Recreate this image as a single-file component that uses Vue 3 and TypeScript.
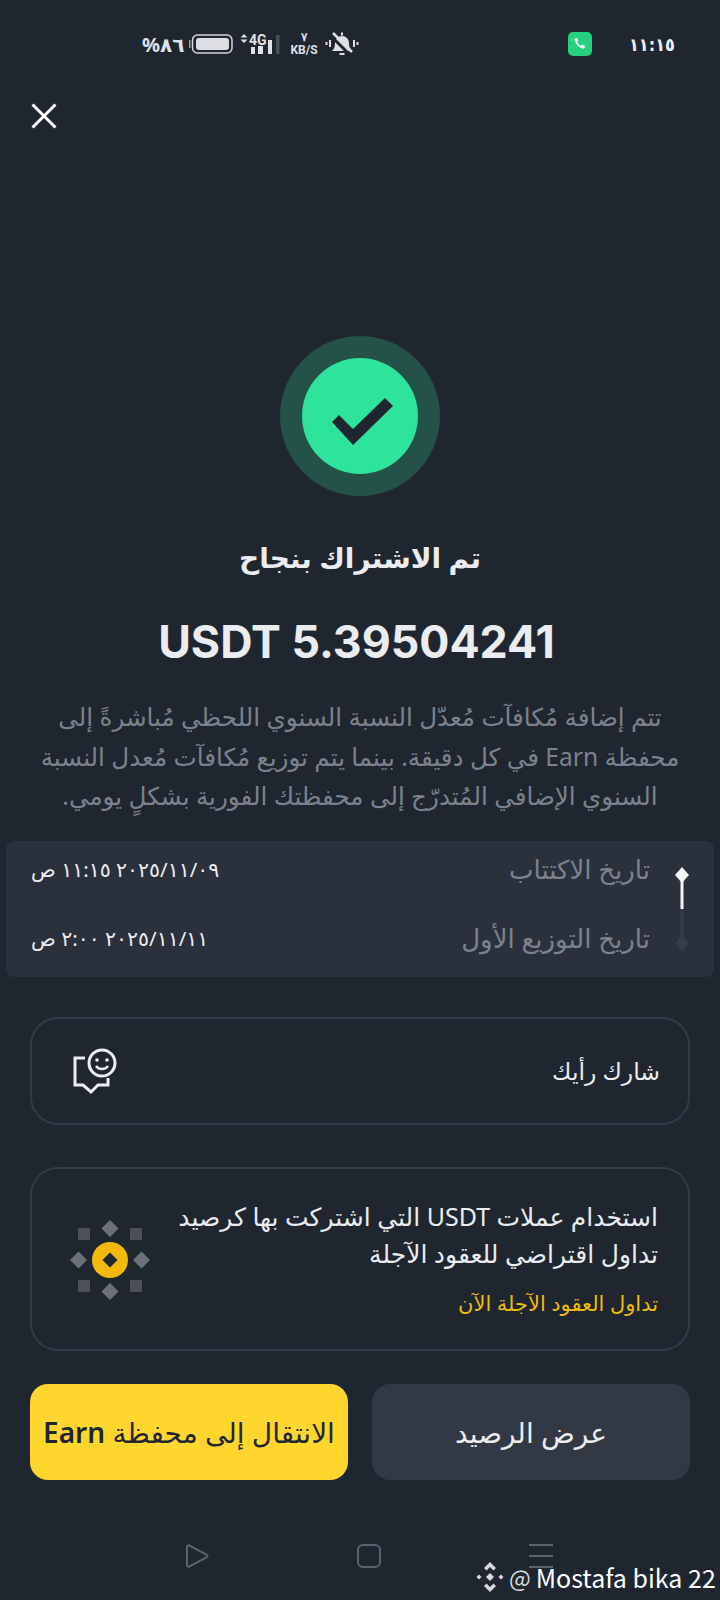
<script setup lang="ts">
interface DateRow { label: string; value: string }
const dates: DateRow[] = [
  { label: 'تاريخ الاكتتاب', value: '٢٠٢٥/١١/٠٩ ١١:١٥ ص' },
  { label: 'تاريخ التوزيع الأول', value: '٢٠٢٥/١١/١١ ٢:٠٠ ص' },
]
const paragraph: string[] = [
  'تتم إضافة مُكافآت مُعدّل النسبة السنوي اللحظي مُباشرةً إلى',
  'محفظة Earn في كل دقيقة. بينما يتم توزيع مُكافآت مُعدل النسبة',
  'السنوي الإضافي المُتدرّج إلى محفظتك الفورية بشكلٍ يومي.',
]
</script>

<template>
  <div class="page" dir="rtl">
    <div class="status">
      <span class="time">١١:١٥</span>
      <svg class="call" width="24" height="24" viewBox="0 0 24 24">
        <rect width="24" height="24" rx="5" fill="#25d07f" />
        <path d="M7 6.500l2.200-.6 1.300 3-1.300 1.200c.8 1.600 2 2.800 3.700 3.700l1.200-1.300 3 1.300-.6 2.200c-.2.600-.8.900-1.400.8C10.600 15.300 8 12.500 6.300 8c-.2-.6.1-1.300.7-1.500z" fill="#e8f6ee" />
      </svg>
      <div class="status-left">
        <svg width="34" height="24" viewBox="0 0 34 24" fill="none">
          <path d="M7 19c2-2 3-4 3-8 0-4 3-7 7-7s7 3 7 7c0 4 1 6 3 8z" fill="#dfe1e4" />
          <path d="M14.500 22h5" stroke="#dfe1e4" stroke-width="2" />
          <path d="M16 2h2" stroke="#dfe1e4" stroke-width="3" />
          <path d="M5 3l20 20" stroke="#1f2630" stroke-width="3" />
          <path d="M8 1l19 19" stroke="#dfe1e4" stroke-width="2.500" />
          <path d="M1.500 10v3M32.500 10v3M5 8v7M29 8v7" stroke="#dfe1e4" stroke-width="2" />
        </svg>
        <div class="speed" dir="ltr"><span>٧</span><span>KB/S</span></div>
        <svg width="40" height="24" viewBox="0 0 40 24">
          <path d="M4 2l3.500 3.500h-7zM4 11L.5 7.500h7z" fill="#dfe1e4" />
          <text x="9" y="13" class="net">4G</text>
          <rect x="11" y="15" width="4" height="7" fill="#dfe1e4" />
          <rect x="18" y="14" width="5" height="8" fill="#dfe1e4" />
          <rect x="28" y="8" width="4" height="14" fill="#dfe1e4" />
          <rect x="36" y="3" width="3.500" height="19" fill="#4a505a" />
        </svg>
        <svg width="44" height="20" viewBox="0 0 44 20">
          <rect x="3.500" y="1" width="39.500" height="18" rx="5" fill="none" stroke="#d5d7db" stroke-width="1.500" />
          <rect x="7" y="4" width="33" height="12" rx="3" fill="#dcdee1" />
          <rect x="0" y="6" width="1.500" height="8" fill="#9a9da3" />
        </svg>
        <span class="battery" dir="ltr">%٨٦</span>
      </div>
    </div>

    <div class="close-row">
      <svg width="26" height="26" viewBox="0 0 26 26" stroke="#fff" stroke-width="3" fill="none">
        <path d="M1.500 1.500l23 23M24.500 1.500l-23 23" />
      </svg>
    </div>

    <div class="hero">
      <svg width="160" height="160" viewBox="0 0 160 160">
        <circle cx="80" cy="80" r="80" fill="#245148" />
        <circle cx="80" cy="80" r="58" fill="#2ee39c" />
        <polygon points="52,86 59,79 73,93 105,62 113,70 73,109" fill="#1f2630" />
      </svg>
      <h1 class="title">تم الاشتراك بنجاح</h1>
      <div class="amount" dir="ltr">USDT 5.39504241</div>
      <p class="desc"><template v-for="(line, i) in paragraph" :key="i">{{ line }}<br /></template></p>
    </div>

    <div class="panel">
      <svg class="track" width="20" height="92" viewBox="0 0 20 92">
        <path d="M10 30v50" stroke="#363c48" stroke-width="3" />
        <path d="M10 10v36" stroke="#f2f3f5" stroke-width="3" />
        <polygon points="10,4 17,12 10,20 3,12" fill="#f2f3f5" />
        <polygon points="10,72 17,80 10,88 3,80" fill="#363c48" />
      </svg>
      <div class="rows">
        <div v-for="d in dates" :key="d.label" class="row">
          <span class="label">{{ d.label }}</span>
          <span class="value">{{ d.value }}</span>
        </div>
      </div>
    </div>

    <div class="card feedback">
      <span class="feedback-text">شارك رأيك</span>
      <svg width="44" height="48" viewBox="0 0 44 48" fill="none" stroke="#eceef1" stroke-width="3">
        <circle cx="29" cy="16" r="13" />
        <path d="M12 11H2v27h8l8 7 7-7h10v-7" />
        <circle cx="24" cy="13" r="1.800" fill="#eceef1" stroke="none" />
        <circle cx="34" cy="13" r="1.800" fill="#eceef1" stroke="none" />
        <path d="M23 19c3 4 9 4 12 0" stroke-width="2.500" />
      </svg>
    </div>

    <div class="card promo">
      <div class="promo-text">
        <p class="promo-main">استخدام عملات USDT التي اشتركت بها كرصيد<br />تداول اقتراضي للعقود الآجلة</p>
        <p class="promo-link">تداول العقود الآجلة الآن</p>
      </div>
      <svg class="coin" width="82" height="82" viewBox="0 0 82 82">
        <g fill="#6b7079">
          <polygon points="41,1 49.500,9.500 41,18 32.500,9.500" />
          <polygon points="41,64 49.500,72.500 41,81 32.500,72.500" />
          <polygon points="9.500,32.500 18,41 9.500,49.500 1,41" />
          <polygon points="72.500,32.500 81,41 72.500,49.500 64,41" />
        </g>
        <g fill="#4b505b">
          <rect x="9" y="9" width="12" height="12" />
          <rect x="61" y="9" width="12" height="12" />
          <rect x="9" y="61" width="12" height="12" />
          <rect x="61" y="61" width="12" height="12" />
        </g>
        <circle cx="41" cy="41" r="18" fill="#f0b90b" />
        <polygon points="41,33.500 48.500,41 41,48.500 33.500,41" fill="#1f2630" />
      </svg>
    </div>

    <div class="actions">
      <button class="btn secondary">عرض الرصيد</button>
      <button class="btn primary">الانتقال إلى محفظة <span class="earn">Earn</span></button>
    </div>

    <div class="nav" dir="ltr">
      <svg width="24" height="24" viewBox="0 0 24 24" fill="none" stroke="#5c626d" stroke-width="2">
        <path d="M2 3c0-1.500 1.500-2 2.500-1.300L21.500 10.500c1.300.8 1.300 2.200 0 3L4.500 22.300C3.500 23 2 22.500 2 21z" />
      </svg>
      <svg width="24" height="24" viewBox="0 0 24 24" fill="none" stroke="#5c626d" stroke-width="2">
        <rect x="1" y="1" width="22" height="22" rx="5" />
      </svg>
      <svg width="24" height="24" viewBox="0 0 24 24" fill="none" stroke="#5c626d" stroke-width="2">
        <path d="M0 1h24M0 12h24M0 23h24" />
      </svg>
    </div>

    <div class="watermark" dir="ltr">
      <svg width="28" height="30" viewBox="0 0 28 30" fill="#d8dadd">
        <path d="M14 0l6 6-2.500 2.500L14 5l-3.500 3.500L8 6zM14 30l-6-6 2.500-2.500L14 25l3.500-3.500L20 24z" />
        <path d="M14 11l4 4-4 4-4-4z" />
        <path d="M3 12.500L5.500 15 3 17.500.5 15zM25 12.500l2.500 2.500-2.500 2.500-2.500-2.500z" />
      </svg>
      <span class="at">@</span>
      <span class="wm-name">Mostafa bika 22</span>
    </div>
  </div>
</template>

<style scoped>
.page {
  position: relative;
  width: 720px;
  height: 1600px;
  overflow: hidden;
  background: #1f2630;
  color: #eaecef;
  font-family: "Noto Sans", "DejaVu Sans", sans-serif;
}
.status {
  display: flex;
  align-items: center;
  height: 88px;
  padding: 0 45px 0 0;
  box-sizing: border-box;
  color: #eceef1;
}
.time {
  font-family: "DejaVu Sans", sans-serif;
  font-stretch: condensed;
  font-size: 18px;
  font-weight: 700;
  width: 40px;
  white-space: nowrap;
}
.call { margin-right: 43px; }
.status-left {
  display: flex;
  align-items: center;
  gap: 7px;
  margin-right: auto;
  padding-left: 142px;
  color: #dfe1e4;
}
.battery { font-size: 20px; font-weight: 700; width: 40px; white-space: nowrap; text-align: center; }
.speed {
  display: flex;
  flex-direction: column;
  align-items: center;
  width: 28px;
  margin-left: 3px;
  font-size: 12px;
  font-weight: 700;
  line-height: 13px;
  font-family: Roboto, sans-serif;
}
.net { font-family: Roboto, sans-serif; font-size: 14px; font-weight: 700; fill: #dfe1e4; direction: ltr; }
.close-row {
  display: flex;
  justify-content: flex-end;
  padding: 15px 0 0 31px;
  height: 54px;
}
.hero {
  display: flex;
  flex-direction: column;
  align-items: center;
  padding-top: 179px;
}
.title {
  margin: 37px 0 0;
  font-size: 28px;
  line-height: 48px;
  font-weight: 700;
  color: #eaecef;
}
.amount {
  margin: 31px 7px 0 0;
  font-family: Inter, sans-serif;
  font-size: 44.700px;
  font-weight: 700;
  line-height: 60px;
  color: #eaecef;
}
.desc {
  margin: 25px 0 0;
  font-size: 24.600px;
  line-height: 39.500px;
  text-align: center;
  color: #7c828d;
  white-space: nowrap;
}
.panel {
  display: flex;
  align-items: flex-start;
  gap: 22px;
  margin: 25.500px 6px 0;
  height: 136px;
  padding: 0 22px 0 25px;
  background: #2a303c;
  border-radius: 8px;
}
.track { flex: none; margin-top: 22px; }
.rows { flex: 1; display: flex; flex-direction: column; gap: 25px; padding-top: 6px; }
.row { display: flex; justify-content: space-between; align-items: center; height: 44px; }
.label { font-size: 26px; color: #7c828d; }
.value { font-size: 20.500px; color: #eaecef; }
.card {
  display: flex;
  margin: 0 30px;
  border: 2px solid #343a46;
  border-radius: 28px;
  box-sizing: border-box;
}
.feedback {
  margin-top: 40px;
  height: 108px;
  align-items: center;
  justify-content: space-between;
  padding: 0 28px 0 41px;
}
.feedback-text { font-size: 23.500px; color: #eaecef; }
.promo {
  margin-top: 42px;
  height: 184px;
  align-items: center;
  justify-content: space-between;
  padding: 0 30px 0 37px;
}
.promo-text { margin-top: -2px; }
.promo-main { margin: 0; font-size: 25px; line-height: 37px; color: #eaecef; white-space: nowrap; }
.promo-link { margin: 16px 0 0; font-size: 21px; line-height: 30px; color: #f0b90b; }
.coin { flex: none; margin-top: 1px; }
.actions {
  display: flex;
  gap: 24px;
  margin: 33px 30px 0;
}
.btn {
  flex: 1;
  height: 96px;
  border: none;
  border-radius: 18px;
  font-family: inherit;
  font-size: 28px;
  padding: 0;
}
.secondary { background: #323844; color: #eaecef; }
.primary { background: #ffd62e; color: #1f2630; font-weight: 500; white-space: nowrap; }
.earn { font-weight: 600; }
.nav {
  display: flex;
  gap: 148px;
  margin-top: 64px;
  padding-left: 185px;
}
.watermark {
  position: absolute;
  left: 476px;
  top: 1559px;
  display: flex;
  align-items: center;
  gap: 5px;
  color: #fff;
  white-space: nowrap;
  font-family: "Noto Sans CJK SC", "Noto Sans", sans-serif;
}
.at { font-size: 23px; color: #d8dadd; }
.wm-name { font-size: 25px; }
</style>
